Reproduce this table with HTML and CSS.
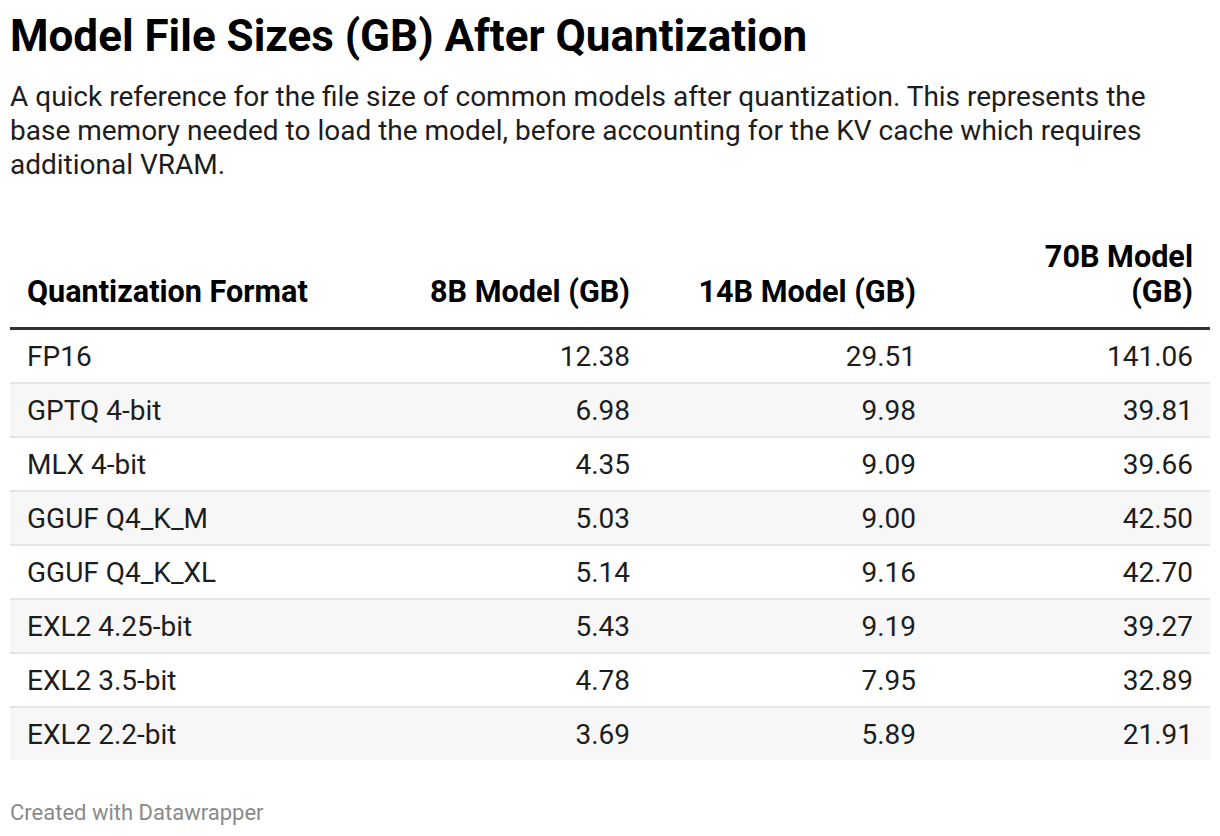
FILE: index.html
```html
<!DOCTYPE html>
<html>
<head>
<meta charset="utf-8">
<link rel="stylesheet" href="styles.css">
</head>
<body>
<div class="chart">
  <h1 class="title">Model File Sizes (GB) After Quantization</h1>
  <p class="desc">A quick reference for the file size of common models after quantization. This represents the base memory needed to load the model, before accounting for the KV cache which requires additional VRAM.</p>
  <table class="tbl">
    <colgroup>
      <col class="c1"><col class="c2"><col class="c3"><col class="c4">
    </colgroup>
    <thead>
      <tr>
        <th class="left">Quantization Format</th>
        <th class="num">8B Model (GB)</th>
        <th class="num">14B Model (GB)</th>
        <th class="num last">70B Model (GB)</th>
      </tr>
    </thead>
    <tbody>
      <tr><td>FP16</td><td class="num">12.38</td><td class="num">29.51</td><td class="num">141.06</td></tr>
      <tr><td>GPTQ 4-bit</td><td class="num">6.98</td><td class="num">9.98</td><td class="num">39.81</td></tr>
      <tr><td>MLX 4-bit</td><td class="num">4.35</td><td class="num">9.09</td><td class="num">39.66</td></tr>
      <tr><td>GGUF Q4_K_M</td><td class="num">5.03</td><td class="num">9.00</td><td class="num">42.50</td></tr>
      <tr><td>GGUF Q4_K_XL</td><td class="num">5.14</td><td class="num">9.16</td><td class="num">42.70</td></tr>
      <tr><td>EXL2 4.25-bit</td><td class="num">5.43</td><td class="num">9.19</td><td class="num">39.27</td></tr>
      <tr><td>EXL2 3.5-bit</td><td class="num">4.78</td><td class="num">7.95</td><td class="num">32.89</td></tr>
      <tr><td>EXL2 2.2-bit</td><td class="num">3.69</td><td class="num">5.89</td><td class="num">21.91</td></tr>
    </tbody>
  </table>
  <div class="footer">Created with Datawrapper</div>
</div>
</body>
</html>
```

FILE: styles.css
```css
html, body {
  margin: 0;
  padding: 0;
  background: #ffffff;
}
body {
  font-family: Roboto, "Liberation Sans", sans-serif;
  color: #1d1d1d;
}
.chart {
  padding: 10px 10px 0 10px;
}
.title {
  margin: 0;
  font-size: 44px;
  line-height: 52px;
  font-weight: 700;
  color: #000;
}
.desc {
  margin: 18px 0 0 0;
  font-size: 28px;
  line-height: 34px;
  color: #1d1d1d;
}
.tbl {
  margin-top: 57px;
  width: 1200px;
  border-collapse: collapse;
  table-layout: fixed;
}
.c1 { width: 350px; }
.c2 { width: 287px; }
.c3 { width: 286px; }
.c4 { width: 277px; }
.tbl th {
  font-size: 30.6px;
  font-weight: 700;
  line-height: 35px;
  color: #000;
  padding: 0 17px 18px 17px;
  vertical-align: bottom;
  border-bottom: 3px solid #333333;
}
.tbl th.left { text-align: left; }
.tbl .num { text-align: right; }
.tbl th.last { padding-left: 70px; }
.tbl td {
  font-size: 28px;
  height: 52px;
  padding: 0 17px;
  vertical-align: middle;
  color: #1d1d1d;
  border-bottom: 2px solid #e6e6e6;
}
.tbl tbody tr:nth-child(even) td {
  background: #f7f7f7;
}
.tbl tbody tr:last-child td {
  border-bottom: none;
}
.footer {
  margin-top: 40px;
  font-size: 22px;
  line-height: 26px;
  color: #8a8a8a;
}
```
